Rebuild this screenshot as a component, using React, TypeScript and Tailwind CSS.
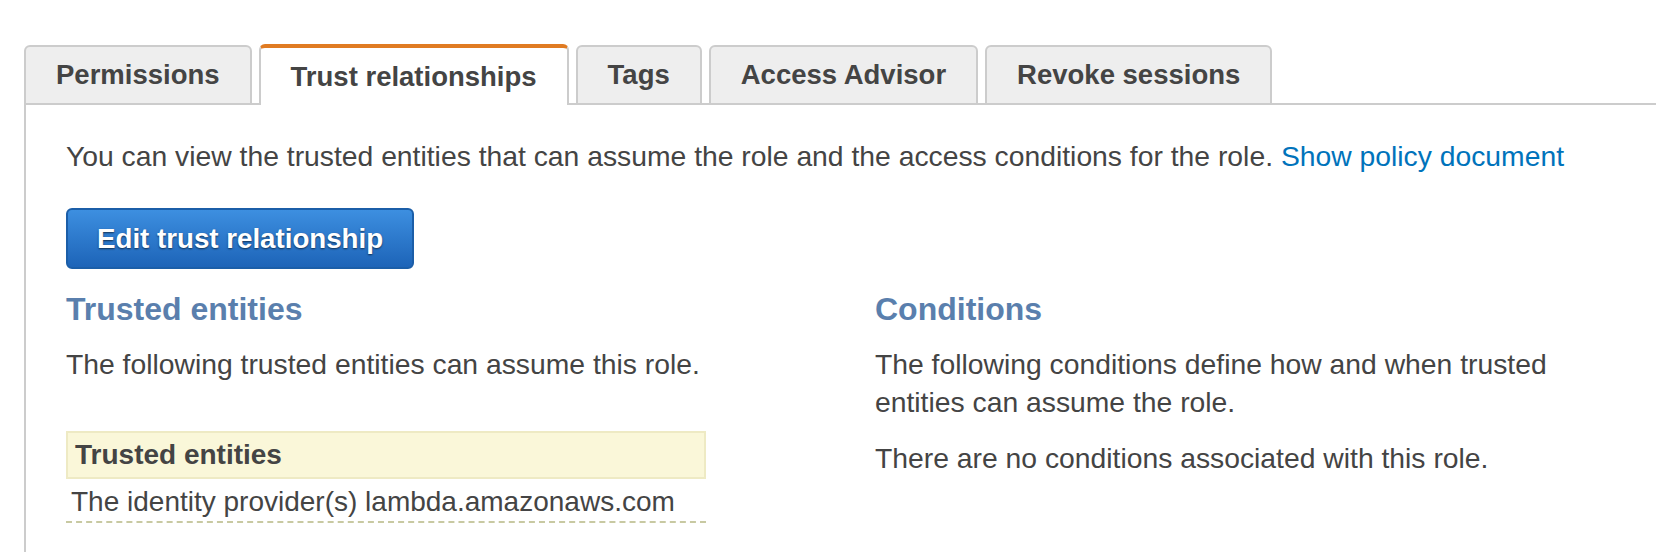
import React from 'react';

const tabs = ['Permissions', 'Trust relationships', 'Tags', 'Access Advisor', 'Revoke sessions'];
const active = 'Trust relationships';

function Tab({ label }: { label: string }) {
  if (label === active) {
    return (
      <div className="h-[61px] px-[30px] flex items-center bg-white border-x-2 border-[#cccccc] border-t-4 border-t-[#e07b22] rounded-t-[6px] text-[27.5px] font-bold text-[#444444]">
        {label}
      </div>
    );
  }
  return (
    <div className="h-[60px] px-[30px] flex items-center bg-[#eeeeee] border-2 border-[#cccccc] rounded-t-[6px] text-[27.5px] font-bold text-[#444444]">
      {label}
    </div>
  );
}

export default function App() {
  return (
    <div className="min-h-[552px] bg-white pt-[44px] pl-[24px] font-['Liberation_Sans',Arial,sans-serif] text-[#444444]">
      {/* Tabs */}
      <div className="flex items-end">
        {tabs.map((t, i) => (
          <React.Fragment key={t}>
            {i > 0 && <div className="w-[7px] h-[2px] bg-[#cccccc]" />}
            <Tab label={t} />
          </React.Fragment>
        ))}
        <div className="flex-1 h-[2px] bg-[#cccccc]" />
      </div>

      {/* Panel */}
      <div className="border-l-2 border-[#cccccc] pl-[40px] pt-[32px] pb-[40px]">
        <p className="text-[28.3px] leading-[38px]">
          You can view the trusted entities that can assume the role and the access conditions for the role.{' '}
          <a className="text-[#0073bb]">Show policy document</a>
        </p>

        <button className="mt-[33px] h-[61px] px-[29px] rounded-[6px] border-2 border-[#1b5ea8] bg-gradient-to-b from-[#3d8fe0] to-[#1d64b8] text-white text-[27.7px] font-bold [text-shadow:0_1px_2px_rgba(0,0,0,0.6)]">
          Edit trust relationship
        </button>

        <div className="flex mt-[21px]">
          {/* Left column */}
          <div className="w-[809px] shrink-0">
            <h3 className="text-[32px] leading-[38px] font-bold text-[#5a7fad]">Trusted entities</h3>
            <p className="mt-[17px] text-[28.3px] leading-[38px]">The following trusted entities can assume this role.</p>
            <div className="mt-[48px] w-[640px]">
              <div className="h-[48px] px-[7px] flex items-center bg-[#faf7d9] border-2 border-[#eeeac4] text-[28px] font-bold">
                Trusted entities
              </div>
              <div className="px-[5px] pt-[4px] text-[28px] leading-[38px] border-b-2 border-dashed border-[#c8c9a2]">
                The identity provider(s) lambda.amazonaws.com
              </div>
            </div>
          </div>

          {/* Right column */}
          <div className="w-[720px] shrink-0">
            <h3 className="text-[32px] leading-[38px] font-bold text-[#5a7fad]">Conditions</h3>
            <p className="mt-[17px] text-[28.3px] leading-[38px]">
              The following conditions define how and when trusted entities can assume the role.
            </p>
            <p className="mt-[18px] text-[28.3px] leading-[38px]">There are no conditions associated with this role.</p>
          </div>
        </div>
      </div>
    </div>
  );
}
